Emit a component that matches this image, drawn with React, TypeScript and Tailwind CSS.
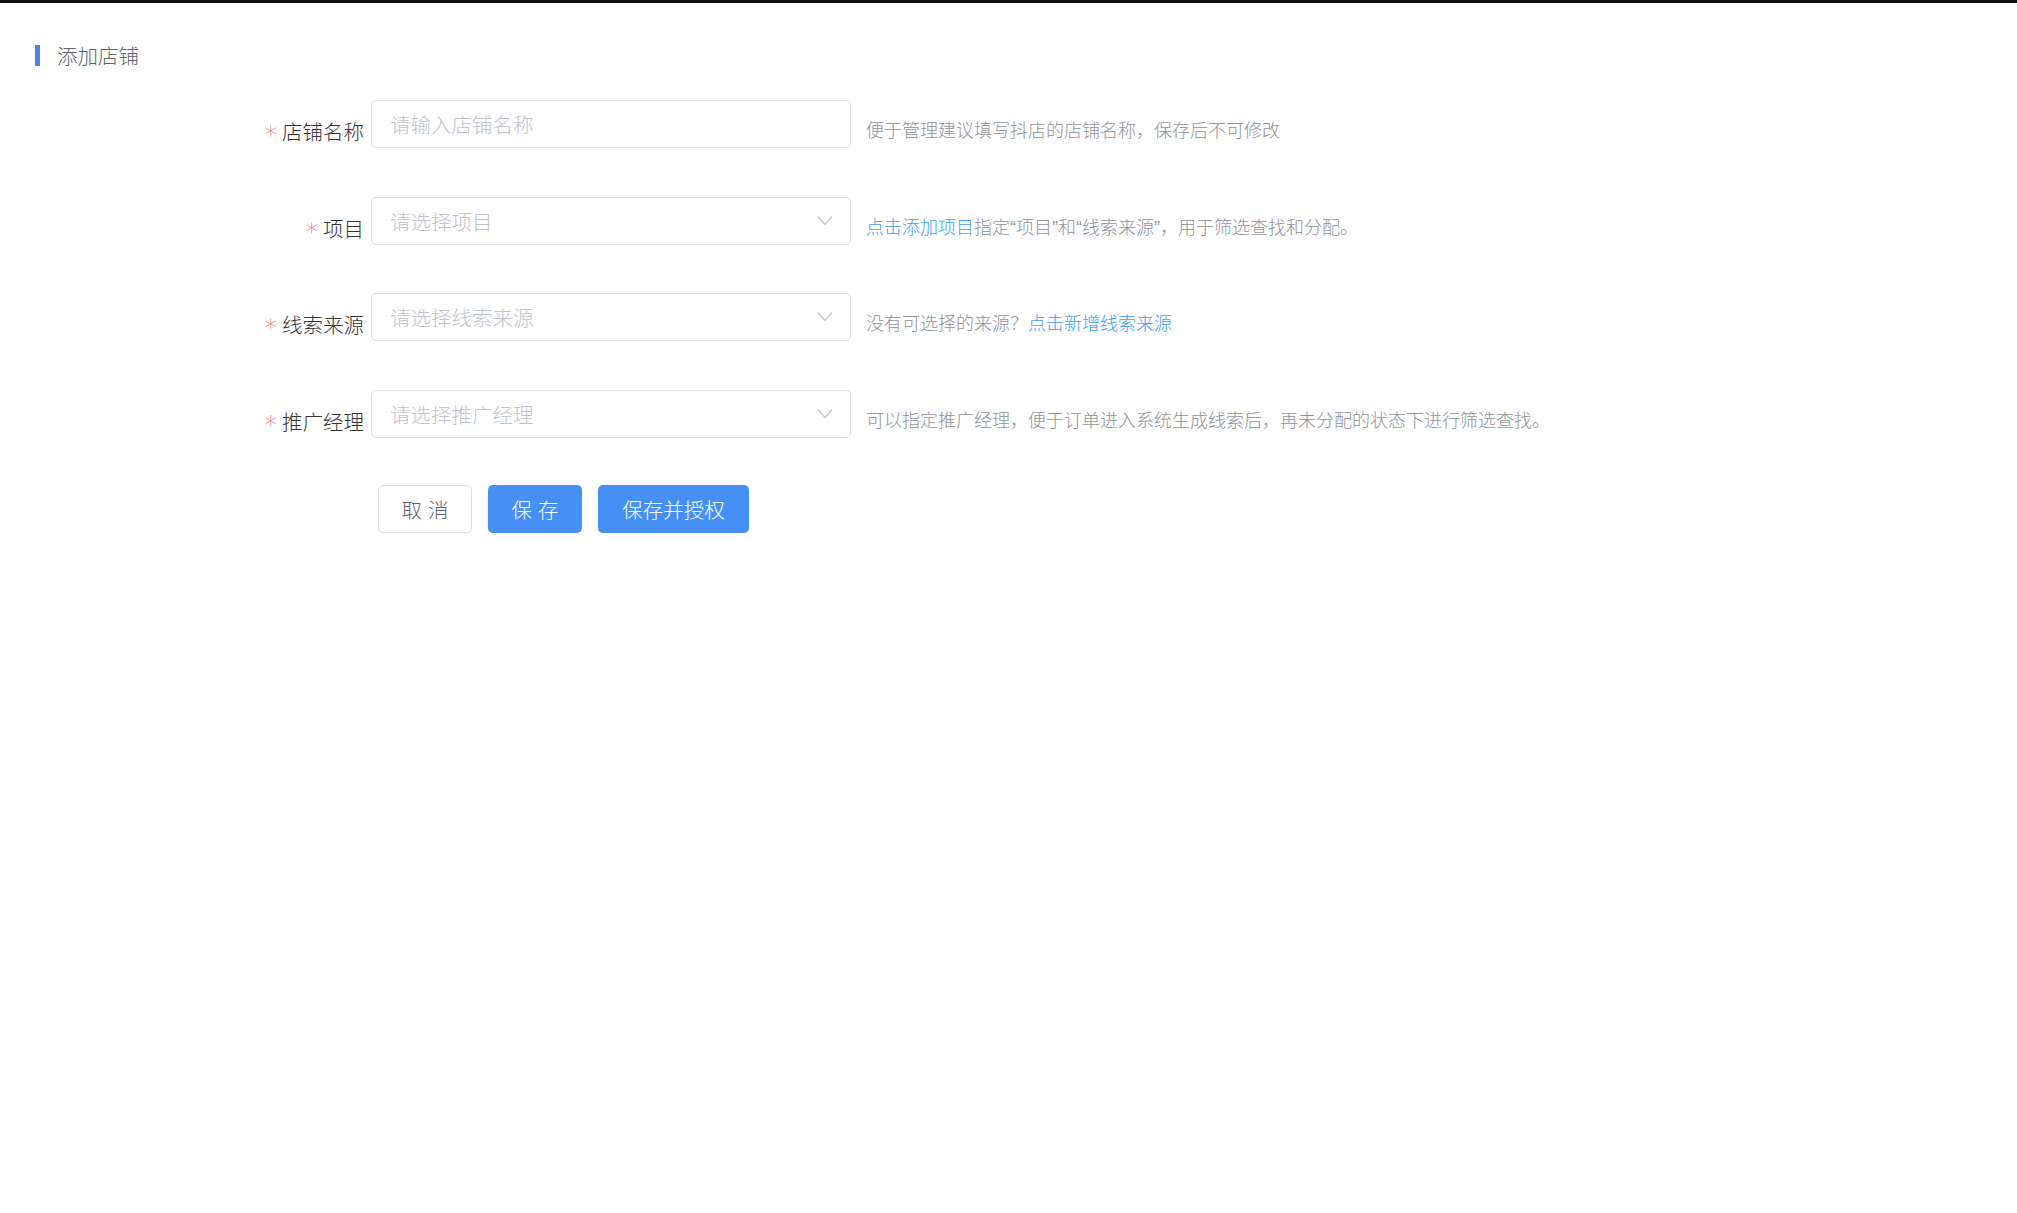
import React from "react";

const font = { fontFamily: '"Noto Sans CJK SC", "Noto Sans", sans-serif' };
const helpFont = { fontFamily: '"Liberation Sans", "Noto Sans CJK SC", sans-serif' };

function Chevron() {
  return (
    <svg width="16" height="11" viewBox="0 0 16 11" className="absolute right-[17px] top-[17px]">
      <path d="M1 1.5 L8 9.5 L15 1.5" fill="none" stroke="#c0c4cc" strokeWidth="1.3" />
    </svg>
  );
}

function Row({
  label,
  placeholder,
  select,
  help,
}: {
  label: string;
  placeholder: string;
  select?: boolean;
  help: React.ReactNode;
}) {
  return (
    <div className="flex items-start">
      <div className="flex w-[150px] shrink-0 items-start justify-end pt-[18px] text-[20.5px] leading-[26px] font-light text-[#333]">
        <span
          className="mr-[5px] mt-[4px] text-[25px] leading-[26px] text-[#f56c6c]"
          style={{ fontFamily: '"DejaVu Sans", sans-serif' }}
        >
          *
        </span>
        <span>{label}</span>
      </div>
      <div className="relative ml-[7px] h-[48px] w-[480px] shrink-0 rounded-[5px] border border-[#dcdfe6] bg-white">
        <div className="pl-[18px] pt-[9px] text-[20.5px] leading-[28px] font-light text-[#c0c4cc]">{placeholder}</div>
        {select && <Chevron />}
      </div>
      <div className="ml-[15px] pt-[19px] text-[18px] leading-[24px] font-light text-[#909399]" style={helpFont}>
        {help}
      </div>
    </div>
  );
}

export default function App() {
  return (
    <div className="min-h-screen w-full bg-white" style={font}>
      <div className="h-[3px] w-full bg-[#111]" />
      <div className="pl-[35px] pt-[42px]">
        <div className="flex h-[21px] items-center">
          <div className="h-[21px] w-[5px] bg-[#4a84f0]" />
          <div className="ml-[17px] -mt-[2px] text-[20.5px] leading-[26px] font-light text-[#606266]">添加店铺</div>
        </div>
      </div>
      <div className="mt-[34px] flex flex-col gap-[48.5px] pl-[214px]">
        <Row
          label="店铺名称"
          placeholder="请输入店铺名称"
          help="便于管理建议填写抖店的店铺名称，保存后不可修改"
        />
        <Row
          label="项目"
          placeholder="请选择项目"
          select
          help={
            <>
              <span className="text-[#409eff]">点击添加项目</span>指定“项目”和“线索来源”，用于筛选查找和分配。
            </>
          }
        />
        <Row
          label="线索来源"
          placeholder="请选择线索来源"
          select
          help={
            <>
              没有可选择的来源？<span className="text-[#409eff]">点击新增线索来源</span>
            </>
          }
        />
        <Row
          label="推广经理"
          placeholder="请选择推广经理"
          select
          help="可以指定推广经理，便于订单进入系统生成线索后，再未分配的状态下进行筛选查找。"
        />
        <div className="-mt-[1px] flex gap-[16px] pl-[164px]">
          <button className="h-[48px] w-[94px] rounded-[5px] border border-[#dcdfe6] bg-white text-[20.5px] font-light tracking-[6px] text-[#606266]">
            <span className="pl-[6px]">取消</span>
          </button>
          <button className="h-[48px] w-[94px] rounded-[5px] bg-[#4690f5] text-[20.5px] font-light tracking-[6px] text-white">
            <span className="pl-[6px]">保存</span>
          </button>
          <button className="h-[48px] w-[151px] rounded-[5px] bg-[#4690f5] text-[20.5px] font-light text-white">
            保存并授权
          </button>
        </div>
      </div>
    </div>
  );
}
